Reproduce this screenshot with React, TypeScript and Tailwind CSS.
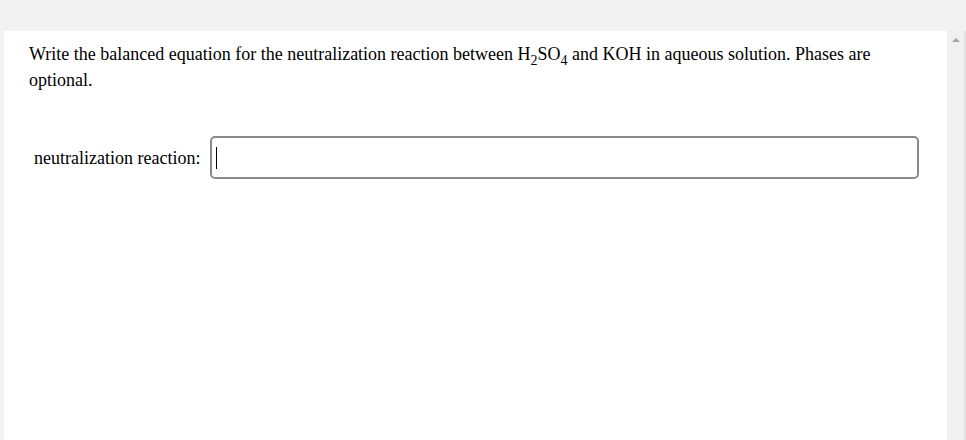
export default function App() {
  return (
    <div className="h-[440px] w-[966px] overflow-hidden bg-[#f2f2f2] pt-[31px] pl-[4px] flex">
      {/* Question panel */}
      <div className="flex-1 min-w-0 h-[409px] bg-white pt-[10px] pl-[25px] pr-[50px] text-[18px] leading-[26px] text-black font-['Liberation_Serif','Times_New_Roman',serif]">
        <p>
          Write the balanced equation for the neutralization reaction between H
          <sub className="text-[14px] bottom-[-0.36em]">2</sub>SO
          <sub className="text-[14px] bottom-[-0.36em]">4</sub> and KOH in aqueous solution. Phases are
          optional.
        </p>

        <div className="mt-[43px] ml-[5px] flex items-center gap-[10px]">
          <span className="whitespace-nowrap">neutralization reaction:</span>
          <div className="h-[43px] w-[709px] shrink-0 rounded-[5px] border-2 border-[#8a8a8a] flex items-center pl-[4px]">
            <span className="block h-[22px] w-px bg-black" />
          </div>
        </div>
      </div>

      {/* Scrollbar */}
      <div className="w-[19px] shrink-0 h-[409px] bg-[#f0f0f0] border-r-2 border-[#e3e3e3] flex justify-center pt-[7px]">
        <div className="h-0 w-0 border-x-[4px] border-b-[4px] border-x-transparent border-b-[#a3a3a3]" />
      </div>
    </div>
  )
}
